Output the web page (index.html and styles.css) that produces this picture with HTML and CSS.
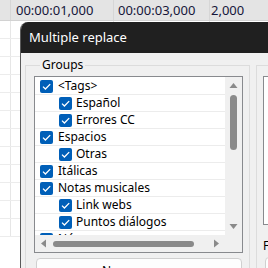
FILE: index.html
```html
<!DOCTYPE html>
<html>
<head>
<meta charset="utf-8">
<link rel="stylesheet" href="styles.css">
</head>
<body>
<div class="grid">
  <div class="ghead">
    <div class="gcell c0"></div>
    <div class="gcell c1">00:00:01,000</div>
    <div class="gcell c2">00:00:03,000</div>
    <div class="gcell c3">2,000</div>
  </div>
  <div class="grow"><div class="gcell c0"></div><div class="gcell c1"></div><div class="gcell c2"></div><div class="gcell c3"></div></div>
  <div class="grow"><div class="gcell c0"></div><div class="gcell c1"></div><div class="gcell c2"></div><div class="gcell c3"></div></div>
  <div class="grow"><div class="gcell c0"></div><div class="gcell c1"></div><div class="gcell c2"></div><div class="gcell c3"></div></div>
  <div class="grow"><div class="gcell c0"></div><div class="gcell c1"></div><div class="gcell c2"></div><div class="gcell c3"></div></div>
  <div class="grow"><div class="gcell c0"></div><div class="gcell c1"></div><div class="gcell c2"></div><div class="gcell c3"></div></div>
  <div class="grow"><div class="gcell c0"></div><div class="gcell c1"></div><div class="gcell c2"></div><div class="gcell c3"></div></div>
  <div class="grow"><div class="gcell c0"></div><div class="gcell c1"></div><div class="gcell c2"></div><div class="gcell c3"></div></div>
  <div class="grow"><div class="gcell c0"></div><div class="gcell c1"></div><div class="gcell c2"></div><div class="gcell c3"></div></div>
  <div class="grow"><div class="gcell c0"></div><div class="gcell c1"></div><div class="gcell c2"></div><div class="gcell c3"></div></div>
  <div class="grow"><div class="gcell c0"></div><div class="gcell c1"></div><div class="gcell c2"></div><div class="gcell c3"></div></div>
  <div class="grow"><div class="gcell c0"></div><div class="gcell c1"></div><div class="gcell c2"></div><div class="gcell c3"></div></div>
  <div class="grow"><div class="gcell c0"></div><div class="gcell c1"></div><div class="gcell c2"></div><div class="gcell c3"></div></div>
</div>

<div class="dialog">
  <div class="titlebar">Multiple replace</div>
  <div class="dbody">
    <fieldset class="gbox groups">
      <legend>Groups</legend>
      <div class="listbox">
        <div class="items">
          <div class="item"><span class="cb"><svg width="13" height="13" viewBox="0 0 13 13"><path d="M3 6.6 L5.4 9 L10.2 4.1" fill="none" stroke="#fff" stroke-width="1.3"/></svg></span><span class="lbl">&lt;Tags&gt;</span></div>
          <div class="item l1"><span class="cb"><svg width="13" height="13" viewBox="0 0 13 13"><path d="M3 6.6 L5.4 9 L10.2 4.1" fill="none" stroke="#fff" stroke-width="1.3"/></svg></span><span class="lbl">Español</span></div>
          <div class="item l1"><span class="cb"><svg width="13" height="13" viewBox="0 0 13 13"><path d="M3 6.6 L5.4 9 L10.2 4.1" fill="none" stroke="#fff" stroke-width="1.3"/></svg></span><span class="lbl">Errores CC</span></div>
          <div class="item"><span class="cb"><svg width="13" height="13" viewBox="0 0 13 13"><path d="M3 6.6 L5.4 9 L10.2 4.1" fill="none" stroke="#fff" stroke-width="1.3"/></svg></span><span class="lbl">Espacios</span></div>
          <div class="item l1"><span class="cb"><svg width="13" height="13" viewBox="0 0 13 13"><path d="M3 6.6 L5.4 9 L10.2 4.1" fill="none" stroke="#fff" stroke-width="1.3"/></svg></span><span class="lbl">Otras</span></div>
          <div class="item"><span class="cb"><svg width="13" height="13" viewBox="0 0 13 13"><path d="M3 6.6 L5.4 9 L10.2 4.1" fill="none" stroke="#fff" stroke-width="1.3"/></svg></span><span class="lbl">Itálicas</span></div>
          <div class="item"><span class="cb"><svg width="13" height="13" viewBox="0 0 13 13"><path d="M3 6.6 L5.4 9 L10.2 4.1" fill="none" stroke="#fff" stroke-width="1.3"/></svg></span><span class="lbl">Notas musicales</span></div>
          <div class="item l1"><span class="cb"><svg width="13" height="13" viewBox="0 0 13 13"><path d="M3 6.6 L5.4 9 L10.2 4.1" fill="none" stroke="#fff" stroke-width="1.3"/></svg></span><span class="lbl">Link webs</span></div>
          <div class="item l1"><span class="cb"><svg width="13" height="13" viewBox="0 0 13 13"><path d="M3 6.6 L5.4 9 L10.2 4.1" fill="none" stroke="#fff" stroke-width="1.3"/></svg></span><span class="lbl">Puntos diálogos</span></div>
          <div class="item"><span class="cb"><svg width="13" height="13" viewBox="0 0 13 13"><path d="M3 6.6 L5.4 9 L10.2 4.1" fill="none" stroke="#fff" stroke-width="1.3"/></svg></span><span class="lbl">Números</span></div>
        </div>
        <div class="vscroll">
          <svg class="arr" width="17" height="17" viewBox="0 0 17 17"><path d="M4.5 11 L8.5 6 L12.5 11 Z" fill="#8a8a8a"/></svg>
          <div class="vtrack"><div class="vthumb"></div></div>
          <svg class="arr" width="17" height="17" viewBox="0 0 17 17"><path d="M4.5 6 L8.5 11 L12.5 6 Z" fill="#8a8a8a"/></svg>
        </div>
        <div class="hscroll">
          <svg class="arr" width="17" height="17" viewBox="0 0 17 17"><path d="M11 4.5 L6 8.5 L11 12.5 Z" fill="#8a8a8a"/></svg>
          <div class="htrack"><div class="hthumb"></div></div>
          <svg class="arr" width="17" height="17" viewBox="0 0 17 17"><path d="M6 4.5 L11 8.5 L6 12.5 Z" fill="#8a8a8a"/></svg>
        </div>
        <div class="corner"></div>
      </div>
      <div class="btn">Nuevo grupo</div>
    </fieldset>
    <div class="rightcol">
      <fieldset class="gbox rbox">
        <legend>Reglas</legend>
        <div class="rlist"></div>
        <div class="flabel">Filtro</div>
        <div class="rbtn"></div>
      </fieldset>
    </div>
  </div>
</div>
</body>
</html>
```

FILE: styles.css
```css
* { box-sizing: border-box; }
html, body { margin: 0; padding: 0; }
body {
  width: 268px;
  height: 268px;
  overflow: hidden;
  position: relative;
  background: #ffffff;
  font-family: "Noto Sans", "DejaVu Sans", sans-serif;
  font-size: 12px;
  color: #000;
}

/* background grid */
.grid { display: flex; flex-direction: column; }
.ghead, .grow { display: flex; }
.ghead { height: 21px; background: #e4e4e4; border-bottom: 1px solid #d2d2d2; }
.grow { height: 18px; border-bottom: 1px solid #ececec; }
.gcell { flex: none; border-right: 1px solid #d6d6d6; height: 100%; }
.grow .gcell { border-right-color: #e6e6e6; }
.c0 { width: 11px; }
.c1 { width: 103px; }
.c2 { width: 96px; }
.c3 { width: 80px; }
.ghead .gcell {
  font-size: 13px;
  line-height: 20px;
  color: #16163a;
  white-space: nowrap;
}
.ghead .c1 { padding-left: 5px; }
.ghead .c2 { padding-left: 4px; }
.ghead .c3 { padding-left: 1px; }

/* dialog */
.dialog {
  position: absolute;
  left: 20px;
  top: 22px;
  width: 270px;
  height: 260px;
  background: #f0f0f0;
  border-left: 1px solid #5a5a5a;
  border-top-left-radius: 8px;
  overflow: hidden;
  display: flex;
  flex-direction: column;
}
.titlebar {
  height: 31px;
  flex: none;
  background: #202020;
  color: #ffffff;
  font-size: 13px;
  line-height: 31px;
  padding-left: 8px;
}
.dbody {
  flex: 1;
  display: flex;
  gap: 6px;
  padding: 4px 0 0 4px;
  align-items: flex-start;
}

.gbox {
  margin: 0;
  border: 1px solid #dcdcdc;
  border-radius: 0;
  min-width: 0;
}
.gbox legend {
  padding: 0 2px;
  margin-left: 6px;
  font-size: 12px;
  line-height: 16px;
  color: #000;
}
.groups {
  flex: none;
  width: 225px;
  padding: 3px 6px 0 8px;
}

.listbox {
  width: 209px;
  height: 177px;
  border: 1px solid #888a8e;
  background: #ffffff;
  display: grid;
  grid-template-columns: 190px 17px;
  grid-template-rows: 158px 17px;
}
.items {
  overflow: hidden;
  padding-top: 1px;
}
.item {
  height: 17px;
  border-bottom: 1px solid #ececec;
  display: flex;
  align-items: center;
  padding-left: 5px;
  white-space: nowrap;
}
.item.l1 { padding-left: 24px; }
.cb {
  flex: none;
  width: 13px;
  height: 13px;
  margin-top: 1px;
  background: #005fb8;
  border-radius: 2px;
  display: flex;
}
.lbl { margin-left: 5px; line-height: 16px; }
.item.l1 .lbl { margin-left: 4px; }

.vscroll {
  background: #f0f0f0;
  display: flex;
  flex-direction: column;
  align-items: center;
}
.vtrack {
  flex: 1;
  width: 17px;
  display: flex;
  justify-content: center;
}
.vthumb {
  width: 7px;
  height: 55px;
  margin-top: 1px;
  background: #8a8a8a;
  border-radius: 4px;
}
.hscroll {
  background: #f0f0f0;
  display: flex;
  align-items: center;
}
.htrack {
  flex: 1;
  height: 17px;
  display: flex;
  align-items: center;
}
.hthumb {
  width: 141px;
  height: 6px;
  margin-left: 1px;
  background: #8a8a8a;
  border-radius: 3px;
}
.arr { flex: none; display: block; }
.corner { background: #f0f0f0; }

.btn {
  margin: 5px 0 0 2px;
  width: 206px;
  height: 28px;
  background: #fdfdfd;
  border: 1px solid #d0d0d0;
  border-radius: 4px;
  text-align: center;
  line-height: 20px;
  font-size: 12px;
  padding-top: 2px;
}

.rightcol { flex: none; width: 60px; }
.rbox {
  width: 60px;
  padding: 3px 0 0 6px;
}
.rlist {
  height: 149px;
  border: 1px solid #888a8e;
  background: #ffffff;
}
.flabel {
  margin-top: 13px;
  line-height: 16px;
  font-size: 12px;
}
.rbtn {
  margin: 3px 0 0 2px;
  height: 24px;
  background: #fdfdfd;
  border: 1px solid #d0d0d0;
  border-radius: 4px;
}
```
